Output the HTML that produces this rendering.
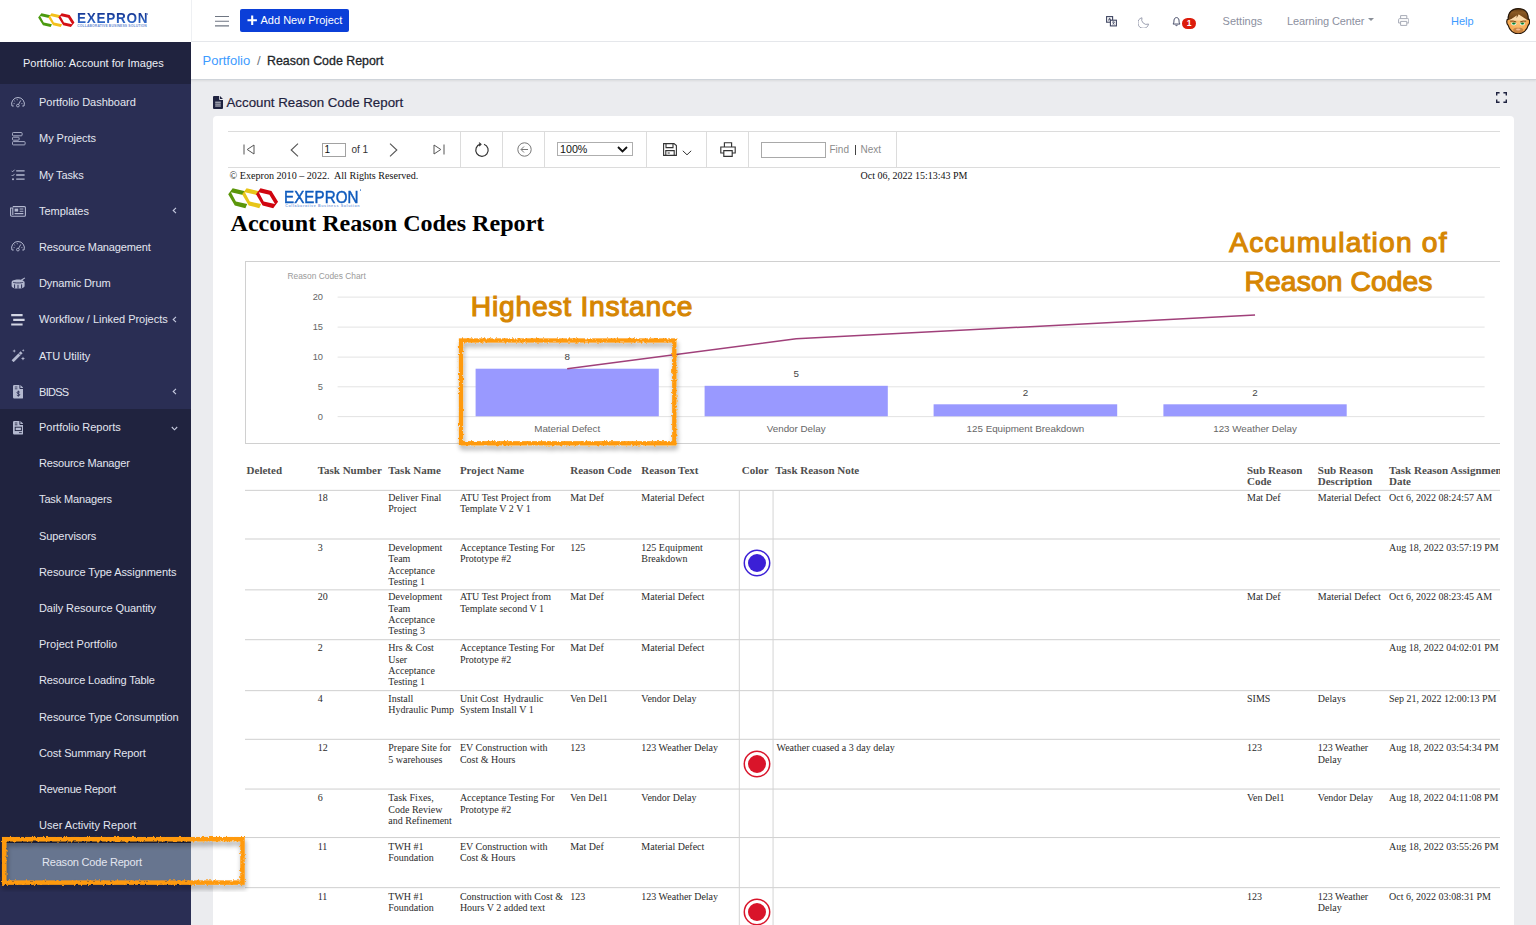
<!DOCTYPE html>
<html><head><meta charset="utf-8"><title>Reason Code Report</title><style>
*{box-sizing:border-box;margin:0;padding:0}
html,body{width:1536px;height:925px;overflow:hidden;background:#ebecef;font-family:"Liberation Sans",sans-serif;}
body{position:relative}
.abs{position:absolute}
.t{position:absolute;white-space:nowrap;line-height:1}
#side{position:absolute;left:0;top:0;width:190.5px;height:925px;background:#2a2e54}
#brand{position:absolute;left:0;top:0;width:190.5px;height:41.5px;background:#fff}
#acct{position:absolute;left:0;top:41.5px;width:190.5px;height:42.5px;background:#20233f}
#sub{position:absolute;left:0;top:409px;width:190.5px;height:476px;background:#20233f}
#active{position:absolute;left:4px;top:843px;width:186.5px;height:38px;background:#67758f}
.si{position:absolute;left:39px;white-space:nowrap;color:#e3e6f0;font-size:11px;line-height:14px}
.car{position:absolute;left:171px;color:#c7cbe0}
#top{position:absolute;left:190px;top:0;width:1346px;height:43px;background:#fff;border-bottom:2px solid #e6e8ec}
#crumb{position:absolute;left:190px;top:42px;width:1346px;height:38px;background:#fff;border-bottom:1px solid #cfd4da;box-shadow:0 1px 2px rgba(0,0,0,.08)}
#card{position:absolute;left:213px;top:116px;width:1301px;height:830px;background:#fff;border-radius:4px}
#rep{position:absolute;left:228px;top:131px;width:1271.5px;height:794px;overflow:hidden}
.sf{font-family:"Liberation Serif",serif}
.hd{position:absolute;font-family:"Liberation Serif",serif;font-weight:700;font-size:11px;line-height:11.3px;color:#4e4e4e;white-space:nowrap}
.c{position:absolute;font-family:"Liberation Serif",serif;font-size:10px;line-height:11.25px;color:#2b2b2b;white-space:nowrap}
.hl{position:absolute;left:17px;width:1260px;height:1px;background:#d4d4d4}
.vl{position:absolute;width:1px;background:#d9d9d9}
.ann{position:absolute;white-space:nowrap;font-weight:400;color:#d68603;-webkit-text-stroke:1.15px #d68603;font-size:28.2px;line-height:30px}
</style></head><body><div id="top"></div><div id="crumb"></div><svg class="abs" style="left:215px;top:15px" width="14" height="12" viewBox="0 0 14 12"><path d="M0 1.5h14M0 6.2h14M0 10.9h14" stroke="#6f7682" stroke-width="1.1" fill="none"/></svg><div class="abs" style="left:240.3px;top:8.5px;width:108.8px;height:23.8px;background:#0b3fd8;border-radius:2px"></div><svg class="abs" style="left:247.3px;top:15.3px" width="10.4" height="10.4" viewBox="0 0 11 11"><path d="M5.5 0.5v10M0.5 5.5h10" stroke="#fff" stroke-width="2.2" fill="none"/></svg><div class="t" style="left:260.5px;top:15.2px;font-size:11px;color:#fff">Add New Project</div><div class="t" style="left:1222.6px;top:15.7px;font-size:11px;color:#8c90a0">Settings</div><div class="t" style="left:1287px;top:15.7px;font-size:11px;color:#8c90a0;letter-spacing:-0.1px">Learning Center</div><div class="abs" style="left:1368.3px;top:18.2px;width:0;height:0;border-left:3px solid transparent;border-right:3px solid transparent;border-top:3px solid #8a8f98"></div><div class="t" style="left:1451px;top:15.7px;font-size:11px;color:#3d9bff">Help</div><div class="t" style="left:202.5px;top:54px;font-size:13px;color:#3d9bff">Portfolio</div><div class="t" style="left:257px;top:54px;font-size:13px;color:#6c757d">/</div><div class="t" style="left:267px;top:54.5px;font-size:12.4px;color:#212529;-webkit-text-stroke:0.3px #212529">Reason Code Report</div><svg class="abs" style="left:213px;top:96px" width="10" height="13" viewBox="0 0 10 13"><path d="M0 1a1 1 0 0 1 1-1h5.2v3.3a.6.6 0 0 0 .6.6H10V12a1 1 0 0 1-1 1H1a1 1 0 0 1-1-1zM7 0l3 3H7z" fill="#1f2340"/><path d="M2.2 6.2h5.6M2.2 8.1h5.6M2.2 10h5.6" stroke="#ebecef" stroke-width=".9"/></svg><div class="t" style="left:226.5px;top:95.5px;font-size:13.3px;color:#1f2340;-webkit-text-stroke:0.2px #1f2340">Account Reason Code Report</div><svg class="abs" style="left:1496px;top:92px" width="11" height="11" viewBox="0 0 11 11"><path d="M0.7 3.6V0.7H3.6M7.4 0.7H10.3V3.6M10.3 7.4V10.3H7.4M3.6 10.3H0.7V7.4" stroke="#1f2340" stroke-width="1.4" fill="none"/></svg><div id="side"></div><div id="brand"></div><div id="acct"></div><div id="sub"></div><div id="active"></div><div class="abs" style="left:191px;top:0;width:1px;height:41px;background:#eef0f3"></div><div class="t" style="left:23px;top:57.6px;font-size:11px;color:#eef0f6">Portfolio: Account for Images</div><div class="si" style="top:95.1px;letter-spacing:-0.024px">Portfolio Dashboard</div><div class="si" style="top:131.3px;letter-spacing:-0.037px">My Projects</div><div class="si" style="top:167.5px;letter-spacing:-0.134px">My Tasks</div><div class="si" style="top:203.7px;letter-spacing:-0.03px">Templates</div><svg class="abs" style="left:172px;top:207.3px" width="5" height="7" viewBox="0 0 5 7"><path d="M4 0.8L1.2 3.5L4 6.2" stroke="#c7cbe0" stroke-width="1.1" fill="none"/></svg><div class="si" style="top:239.9px;letter-spacing:-0.141px">Resource Management</div><div class="si" style="top:276.1px;letter-spacing:-0.103px">Dynamic Drum</div><div class="si" style="top:312.3px;letter-spacing:-0.028px">Workflow / Linked Projects</div><svg class="abs" style="left:172px;top:315.9px" width="5" height="7" viewBox="0 0 5 7"><path d="M4 0.8L1.2 3.5L4 6.2" stroke="#c7cbe0" stroke-width="1.1" fill="none"/></svg><div class="si" style="top:348.5px;letter-spacing:0.016px">ATU Utility</div><div class="si" style="top:384.7px;letter-spacing:-0.704px">BIDSS</div><svg class="abs" style="left:172px;top:388.3px" width="5" height="7" viewBox="0 0 5 7"><path d="M4 0.8L1.2 3.5L4 6.2" stroke="#c7cbe0" stroke-width="1.1" fill="none"/></svg><div class="si" style="top:420.0px;letter-spacing:-0.009px">Portfolio Reports</div><svg class="abs" style="left:171px;top:426.0px" width="7" height="5" viewBox="0 0 7 5"><path d="M0.8 1L3.5 3.8L6.2 1" stroke="#c7cbe0" stroke-width="1.1" fill="none"/></svg><div class="si" style="top:456.2px;letter-spacing:-0.184px">Resource Manager</div><div class="si" style="top:492.4px;letter-spacing:-0.124px">Task Managers</div><div class="si" style="top:528.6px;letter-spacing:-0.078px">Supervisors</div><div class="si" style="top:564.8px;letter-spacing:-0.075px">Resource Type Assignments</div><div class="si" style="top:601.0px;letter-spacing:-0.073px">Daily Resource Quantity</div><div class="si" style="top:637.2px;letter-spacing:0.028px">Project Portfolio</div><div class="si" style="top:673.4px;letter-spacing:-0.117px">Resource Loading Table</div><div class="si" style="top:709.6px;letter-spacing:-0.082px">Resource Type Consumption</div><div class="si" style="top:745.8px;letter-spacing:-0.106px">Cost Summary Report</div><div class="si" style="top:782.0px;letter-spacing:-0.231px">Revenue Report</div><div class="si" style="top:818.2px;letter-spacing:0.032px">User Activity Report</div><div class="si" style="left:42px;top:854.6px;letter-spacing:-0.2px">Reason Code Report</div><div id="card"></div><div id="rep"><div class="abs" style="left:0;top:0;width:1272px;height:1px;background:#dcdcdc"></div><div class="abs" style="left:0;top:36px;width:1272px;height:1px;background:#dcdcdc"></div><div class="abs" style="left:232.0px;top:1px;width:1px;height:35px;background:#dcdcdc"></div><div class="abs" style="left:273.5px;top:1px;width:1px;height:35px;background:#dcdcdc"></div><div class="abs" style="left:316.0px;top:1px;width:1px;height:35px;background:#dcdcdc"></div><div class="abs" style="left:418.0px;top:1px;width:1px;height:35px;background:#dcdcdc"></div><div class="abs" style="left:478.0px;top:1px;width:1px;height:35px;background:#dcdcdc"></div><div class="abs" style="left:520.0px;top:1px;width:1px;height:35px;background:#dcdcdc"></div><div class="abs" style="left:668.0px;top:1px;width:1px;height:35px;background:#dcdcdc"></div><svg class="abs" style="left:15px;top:13px" width="12" height="11" viewBox="0 0 12 11"><path d="M1 0.5v10" stroke="#555" stroke-width="1"/><path d="M11 1L4.2 5.5L11 10z" stroke="#555" stroke-width="1" fill="none" stroke-linejoin="round"/></svg><svg class="abs" style="left:61.5px;top:11.5px" width="9" height="14" viewBox="0 0 9 14"><path d="M8 0.7L1.2 7L8 13.3" stroke="#555" stroke-width="1.1" fill="none"/></svg><div class="abs" style="left:93.5px;top:11.5px;width:24px;height:14px;border:1px solid #a2a2a2;background:#fff"></div><div class="t" style="left:96.5px;top:13.5px;font-size:10px;color:#111">1</div><div class="t" style="left:123.5px;top:13.5px;font-size:10px;color:#333">of 1</div><svg class="abs" style="left:161px;top:11.5px" width="9" height="14" viewBox="0 0 9 14"><path d="M1 0.7L7.8 7L1 13.3" stroke="#555" stroke-width="1.1" fill="none"/></svg><svg class="abs" style="left:204.5px;top:13px" width="12" height="11" viewBox="0 0 12 11"><path d="M11 0.5v10" stroke="#555" stroke-width="1"/><path d="M1 1L7.8 5.5L1 10z" stroke="#555" stroke-width="1" fill="none" stroke-linejoin="round"/></svg><svg class="abs" style="left:246px;top:10.5px" width="16" height="16" viewBox="0 0 16 16"><path d="M6.3 2.2A6.2 6.2 0 1 0 10 2.3" stroke="#333" stroke-width="1.2" fill="none"/><path d="M5 0.6L7 2.2L5.2 4.2" stroke="#333" stroke-width="1.1" fill="none"/></svg><svg class="abs" style="left:288.5px;top:11px" width="15" height="15" viewBox="0 0 15 15"><circle cx="7.5" cy="7.5" r="6.7" stroke="#777" stroke-width="1" fill="none"/><path d="M11 7.5H4.2M7 4.5L4 7.5L7 10.5" stroke="#777" stroke-width="1" fill="none"/></svg><div class="abs" style="left:329px;top:11px;width:76px;height:14px;border:1px solid #aeaeae;background:#fff"></div><div class="t" style="left:332px;top:13.2px;font-size:10.7px;color:#111">100%</div><svg class="abs" style="left:389px;top:14.5px" width="11" height="7" viewBox="0 0 11 7"><path d="M1 1L5.5 5.5L10 1" stroke="#111" stroke-width="1.8" fill="none"/></svg><svg class="abs" style="left:434.5px;top:12px" width="14" height="13" viewBox="0 0 14 13"><path d="M0.6 0.6H11L13.4 2.6V12.4H0.6z" stroke="#333" stroke-width="1.1" fill="none"/><path d="M3 0.6V4.6H10V0.6M2.8 12.4V7.6H11.2V12.4M4.6 10h2.2" stroke="#333" stroke-width="1.1" fill="none"/></svg><svg class="abs" style="left:454px;top:19px" width="10" height="6" viewBox="0 0 10 6"><path d="M0.8 0.8L5 4.8L9.2 0.8" stroke="#333" stroke-width="1" fill="none"/></svg><svg class="abs" style="left:492px;top:11px" width="16" height="15" viewBox="0 0 16 15"><path d="M4.4 5V0.7H11.6V5M3.8 11H0.8V5H15.2V11H12.2M3.8 8.6H12.2V14.3H3.8z" stroke="#333" stroke-width="1.15" fill="none"/></svg><div class="abs" style="left:533px;top:11px;width:65px;height:15.5px;border:1px solid #a9a9a9;background:#fff"></div><div class="t" style="left:601.5px;top:14px;font-size:10px;color:#8c8c8c">Find</div><div class="abs" style="left:627.3px;top:13.5px;width:1px;height:10px;background:#444"></div><div class="t" style="left:632.5px;top:14px;font-size:10px;color:#8c8c8c">Next</div><div class="t sf" style="left:1.6px;top:39.7px;font-size:10.1px;color:#111">© Exepron 2010 – 2022.&nbsp; All Rights Reserved.</div><div class="t sf" style="left:632.5px;top:39.5px;font-size:10px;color:#111">Oct 06, 2022 15:13:43 PM</div><div class="t sf" style="left:2.5px;top:80px;font-size:24.1px;font-weight:700;color:#000">Account Reason Codes Report</div><div class="abs" style="left:17px;top:130px;width:1300px;height:183px;border:1px solid #d0d0d0"></div><div class="t" style="left:59.5px;top:140.8px;font-size:8.4px;color:#9a9a9a">Reason Codes Chart</div><svg class="abs" style="left:0;top:0" width="1272" height="400"><rect x="109.6" y="165.6" width="1147" height="1" fill="#e3e3e3"/><rect x="109.6" y="195.6" width="1147" height="1" fill="#e3e3e3"/><rect x="109.6" y="225.6" width="1147" height="1" fill="#e3e3e3"/><rect x="109.6" y="255.3" width="1147" height="1" fill="#e3e3e3"/><rect x="109.6" y="285.1" width="1147" height="1" fill="#e3e3e3"/><rect x="247.6" y="237.7" width="183.2" height="47.6" fill="#9999ff"/><rect x="476.6" y="254.8" width="183.2" height="30.5" fill="#9999ff"/><rect x="705.6" y="273.3" width="183.6" height="12.0" fill="#9999ff"/><rect x="935.4" y="273.3" width="183.3" height="12.0" fill="#9999ff"/><path d="M339.2 237.73 L568.2 207.84 L797.4 195.89 L1027.05 183.93" stroke="#a0407a" stroke-width="1.5" fill="none"/></svg><div class="t" style="left:72px;top:162.2px;width:23px;text-align:right;font-size:9.3px;color:#666">20</div><div class="t" style="left:72px;top:192.2px;width:23px;text-align:right;font-size:9.3px;color:#666">15</div><div class="t" style="left:72px;top:222.2px;width:23px;text-align:right;font-size:9.3px;color:#666">10</div><div class="t" style="left:72px;top:251.9px;width:23px;text-align:right;font-size:9.3px;color:#666">5</div><div class="t" style="left:72px;top:281.7px;width:23px;text-align:right;font-size:9.3px;color:#666">0</div><div class="t" style="left:289.2px;top:221.1px;width:100px;text-align:center;font-size:9.8px;color:#444">8</div><div class="t" style="left:239.2px;top:293.4px;width:200px;text-align:center;font-size:9.8px;color:#666">Material Defect</div><div class="t" style="left:518.2px;top:238.2px;width:100px;text-align:center;font-size:9.8px;color:#444">5</div><div class="t" style="left:468.20000000000005px;top:293.4px;width:200px;text-align:center;font-size:9.8px;color:#666">Vendor Delay</div><div class="t" style="left:747.4px;top:256.7px;width:100px;text-align:center;font-size:9.8px;color:#444">2</div><div class="t" style="left:697.4px;top:293.4px;width:200px;text-align:center;font-size:9.8px;color:#666">125 Equipment Breakdown</div><div class="t" style="left:977.05px;top:256.7px;width:100px;text-align:center;font-size:9.8px;color:#444">2</div><div class="t" style="left:927.05px;top:293.4px;width:200px;text-align:center;font-size:9.8px;color:#666">123 Weather Delay</div><div class="hd" style="left:18.6px;top:333.5px">Deleted</div><div class="hd" style="left:89.7px;top:333.5px">Task Number</div><div class="hd" style="left:160.3px;top:333.5px">Task Name</div><div class="hd" style="left:231.9px;top:333.5px">Project Name</div><div class="hd" style="left:342.2px;top:333.5px">Reason Code</div><div class="hd" style="left:413.3px;top:333.5px">Reason Text</div><div class="hd" style="left:513.7px;top:333.5px">Color</div><div class="hd" style="left:547.3px;top:333.5px">Task Reason Note</div><div class="hd" style="left:1019px;top:333.5px">Sub Reason<br>Code</div><div class="hd" style="left:1089.8px;top:333.5px">Sub Reason<br>Description</div><div class="hd" style="left:1161px;top:333.5px">Task Reason Assignment<br>Date</div><svg class="abs" style="left:0;top:0" width="1272" height="794"><rect x="17" y="358.85" width="1260" height="1" fill="#cfcfcf"/><rect x="17" y="407.5" width="1260" height="1" fill="#cfcfcf"/><rect x="17" y="458.35" width="1260" height="1" fill="#cfcfcf"/><rect x="17" y="508.2" width="1260" height="1" fill="#cfcfcf"/><rect x="17" y="559.15" width="1260" height="1" fill="#cfcfcf"/><rect x="17" y="607.8" width="1260" height="1" fill="#cfcfcf"/><rect x="17" y="657.55" width="1260" height="1" fill="#cfcfcf"/><rect x="17" y="706.05" width="1260" height="1" fill="#cfcfcf"/><rect x="17" y="756.15" width="1260" height="1" fill="#cfcfcf"/><rect x="510.8" y="359" width="1" height="440" fill="#d4d4d4"/><rect x="544.55" y="359" width="1" height="440" fill="#d4d4d4"/></svg><div class="c" style="left:89.7px;top:361.1px">18</div><div class="c" style="left:160.3px;top:361.1px">Deliver Final</div><div class="c" style="left:160.3px;top:372.35px">Project</div><div class="c" style="left:231.9px;top:361.1px">ATU Test Project from</div><div class="c" style="left:231.9px;top:372.35px">Template V 2 V 1</div><div class="c" style="left:342.2px;top:361.1px">Mat Def</div><div class="c" style="left:413.3px;top:361.1px">Material Defect</div><div class="c" style="left:1019px;top:361.1px">Mat Def</div><div class="c" style="left:1089.8px;top:361.1px">Material Defect</div><div class="c" style="left:1161px;top:361.1px">Oct 6, 2022 08:24:57 AM</div><div class="c" style="left:89.7px;top:411.15px">3</div><div class="c" style="left:160.3px;top:411.15px">Development</div><div class="c" style="left:160.3px;top:422.4px">Team</div><div class="c" style="left:160.3px;top:433.65px">Acceptance</div><div class="c" style="left:160.3px;top:444.9px">Testing 1</div><div class="c" style="left:231.9px;top:411.15px">Acceptance Testing For</div><div class="c" style="left:231.9px;top:422.4px">Prototype #2</div><div class="c" style="left:342.2px;top:411.15px">125</div><div class="c" style="left:413.3px;top:411.15px">125 Equipment</div><div class="c" style="left:413.3px;top:422.4px">Breakdown</div><div class="c" style="left:1161px;top:411.15px">Aug 18, 2022 03:57:19 PM</div><svg class="abs" style="left:514.5px;top:418.45px" width="28" height="28" viewBox="0 0 28 28"><circle cx="14" cy="14" r="12.7" fill="#fff" stroke="#3b1fd6" stroke-width="1.5"/><circle cx="14" cy="14" r="9.0" fill="#3b1fd6"/></svg><div class="c" style="left:89.7px;top:460.4px">20</div><div class="c" style="left:160.3px;top:460.4px">Development</div><div class="c" style="left:160.3px;top:471.65px">Team</div><div class="c" style="left:160.3px;top:482.9px">Acceptance</div><div class="c" style="left:160.3px;top:494.15px">Testing 3</div><div class="c" style="left:231.9px;top:460.4px">ATU Test Project from</div><div class="c" style="left:231.9px;top:471.65px">Template second V 1</div><div class="c" style="left:342.2px;top:460.4px">Mat Def</div><div class="c" style="left:413.3px;top:460.4px">Material Defect</div><div class="c" style="left:1019px;top:460.4px">Mat Def</div><div class="c" style="left:1089.8px;top:460.4px">Material Defect</div><div class="c" style="left:1161px;top:460.4px">Oct 6, 2022 08:23:45 AM</div><div class="c" style="left:89.7px;top:511.3px">2</div><div class="c" style="left:160.3px;top:511.3px">Hrs &amp; Cost</div><div class="c" style="left:160.3px;top:522.55px">User</div><div class="c" style="left:160.3px;top:533.8px">Acceptance</div><div class="c" style="left:160.3px;top:545.05px">Testing 1</div><div class="c" style="left:231.9px;top:511.3px">Acceptance Testing For</div><div class="c" style="left:231.9px;top:522.55px">Prototype #2</div><div class="c" style="left:342.2px;top:511.3px">Mat Def</div><div class="c" style="left:413.3px;top:511.3px">Material Defect</div><div class="c" style="left:1161px;top:511.3px">Aug 18, 2022 04:02:01 PM</div><div class="c" style="left:89.7px;top:561.5px">4</div><div class="c" style="left:160.3px;top:561.5px">Install</div><div class="c" style="left:160.3px;top:572.75px">Hydraulic Pump</div><div class="c" style="left:231.9px;top:561.5px">Unit Cost&nbsp; Hydraulic</div><div class="c" style="left:231.9px;top:572.75px">System Install V 1</div><div class="c" style="left:342.2px;top:561.5px">Ven Del1</div><div class="c" style="left:413.3px;top:561.5px">Vendor Delay</div><div class="c" style="left:1019px;top:561.5px">SIMS</div><div class="c" style="left:1089.8px;top:561.5px">Delays</div><div class="c" style="left:1161px;top:561.5px">Sep 21, 2022 12:00:13 PM</div><div class="c" style="left:89.7px;top:611.3px">12</div><div class="c" style="left:160.3px;top:611.3px">Prepare Site for</div><div class="c" style="left:160.3px;top:622.55px">5 warehouses</div><div class="c" style="left:231.9px;top:611.3px">EV Construction with</div><div class="c" style="left:231.9px;top:622.55px">Cost &amp; Hours</div><div class="c" style="left:342.2px;top:611.3px">123</div><div class="c" style="left:413.3px;top:611.3px">123 Weather Delay</div><div class="c" style="left:1019px;top:611.3px">123</div><div class="c" style="left:1089.8px;top:611.3px">123 Weather</div><div class="c" style="left:1089.8px;top:622.55px">Delay</div><div class="c" style="left:1161px;top:611.3px">Aug 18, 2022 03:54:34 PM</div><div class="c" style="left:548.5px;top:611.3px">Weather cuased a 3 day delay</div><svg class="abs" style="left:514.5px;top:618.75px" width="28" height="28" viewBox="0 0 28 28"><circle cx="14" cy="14" r="12.7" fill="#fff" stroke="#d9142a" stroke-width="1.5"/><circle cx="14" cy="14" r="9.0" fill="#d9142a"/></svg><div class="c" style="left:89.7px;top:661.3px">6</div><div class="c" style="left:160.3px;top:661.3px">Task Fixes,</div><div class="c" style="left:160.3px;top:672.55px">Code Review</div><div class="c" style="left:160.3px;top:683.8px">and Refinement</div><div class="c" style="left:231.9px;top:661.3px">Acceptance Testing For</div><div class="c" style="left:231.9px;top:672.55px">Prototype #2</div><div class="c" style="left:342.2px;top:661.3px">Ven Del1</div><div class="c" style="left:413.3px;top:661.3px">Vendor Delay</div><div class="c" style="left:1019px;top:661.3px">Ven Del1</div><div class="c" style="left:1089.8px;top:661.3px">Vendor Delay</div><div class="c" style="left:1161px;top:661.3px">Aug 18, 2022 04:11:08 PM</div><div class="c" style="left:89.7px;top:710.1px">11</div><div class="c" style="left:160.3px;top:710.1px">TWH #1</div><div class="c" style="left:160.3px;top:721.35px">Foundation</div><div class="c" style="left:231.9px;top:710.1px">EV Construction with</div><div class="c" style="left:231.9px;top:721.35px">Cost &amp; Hours</div><div class="c" style="left:342.2px;top:710.1px">Mat Def</div><div class="c" style="left:413.3px;top:710.1px">Material Defect</div><div class="c" style="left:1161px;top:710.1px">Aug 18, 2022 03:55:26 PM</div><div class="c" style="left:89.7px;top:759.9px">11</div><div class="c" style="left:160.3px;top:759.9px">TWH #1</div><div class="c" style="left:160.3px;top:771.15px">Foundation</div><div class="c" style="left:231.9px;top:759.9px">Construction with Cost &amp;</div><div class="c" style="left:231.9px;top:771.15px">Hours V 2 added text</div><div class="c" style="left:342.2px;top:759.9px">123</div><div class="c" style="left:413.3px;top:759.9px">123 Weather Delay</div><div class="c" style="left:1019px;top:759.9px">123</div><div class="c" style="left:1089.8px;top:759.9px">123 Weather</div><div class="c" style="left:1089.8px;top:771.15px">Delay</div><div class="c" style="left:1161px;top:759.9px">Oct 6, 2022 03:08:31 PM</div><svg class="abs" style="left:514.5px;top:767.1px" width="28" height="28" viewBox="0 0 28 28"><circle cx="14" cy="14" r="12.7" fill="#fff" stroke="#d9142a" stroke-width="1.5"/><circle cx="14" cy="14" r="9.0" fill="#d9142a"/></svg></div><svg class="abs" style="left:37.7px;top:12.75px;overflow:visible" width="36.6" height="14.29" viewBox="0 0 50.27 20.42" preserveAspectRatio="none"><polygon points="4.69,0.24 17.13,3.35 15.1,7.12 2.95,4.15 7.9,13.5 19.2,16.05 17.39,20.16 6.84,17.43 0.2,6.3" fill="#4a9a0e"/><polygon points="18.59,0.24 31.03,3.35 29.0,7.12 16.85,4.15 21.8,13.5 33.1,16.05 31.29,20.16 20.74,17.43 14.1,6.3" fill="#f3c11a"/><path d="M28.0 6.3 L32.49 0.24 L43.43 2.98 L50.07 13.72 L45.19 20.16 L34.64 17.43Z M30.75 4.15 L41.4 6.75 L47.0 16.05 L35.7 13.5Z" fill="#d40f14" fill-rule="evenodd"/></svg><div class="t" style="left:76.5px;top:10.6px;font-size:14.5px;font-weight:700;color:#1f49a8;letter-spacing:0.75px;transform:scaleX(0.935);transform-origin:0 0;background:linear-gradient(#183a96 20%,#2d66c8 85%);-webkit-background-clip:text;background-clip:text;-webkit-text-fill-color:transparent">EXEPRON</div><svg class="abs" style="left:76.8px;top:24.4px" width="71" height="4" viewBox="0 0 71 4"><text x="0.2" y="2.9" font-family="Liberation Sans" font-size="3.4" font-weight="700" fill="#6f8fd2" textLength="69.5" lengthAdjust="spacing">COLLABORATIVE BUSINESS SOLUTION</text></svg><div class="abs" style="left:146.6px;top:13.4px;width:1.6px;height:1.6px;border-radius:50%;background:#7d97d1"></div><svg class="abs" style="left:227.85px;top:187.7px;overflow:visible" width="50.27" height="20.42" viewBox="0 0 50.27 20.42" preserveAspectRatio="none"><polygon points="4.69,0.24 17.13,3.35 15.1,7.12 2.95,4.15 7.9,13.5 19.2,16.05 17.39,20.16 6.84,17.43 0.2,6.3" fill="#5b960a"/><polygon points="18.59,0.24 31.03,3.35 29.0,7.12 16.85,4.15 21.8,13.5 33.1,16.05 31.29,20.16 20.74,17.43 14.1,6.3" fill="#e8c518"/><path d="M28.0 6.3 L32.49 0.24 L43.43 2.98 L50.07 13.72 L45.19 20.16 L34.64 17.43Z M30.75 4.15 L41.4 6.75 L47.0 16.05 L35.7 13.5Z" fill="#d0050f" fill-rule="evenodd"/></svg><div class="t" style="left:284.3px;top:189.9px;font-size:16px;color:#0f5bbd;letter-spacing:0.1px;transform:scaleX(0.945);transform-origin:0 0;-webkit-text-stroke:0.45px #0f5bbd">EXEPRON</div><svg class="abs" style="left:284.6px;top:203.6px" width="76" height="4" viewBox="0 0 76 4"><text x="0.2" y="3.1" font-family="Liberation Sans" font-size="3.7" font-weight="700" fill="#7fa4dc" textLength="74.4" lengthAdjust="spacing">Collaborative Business Solution</text></svg><div class="abs" style="left:359.7px;top:189.3px;width:1.8px;height:1.8px;border-radius:50%;background:#5d92d6"></div><svg class="abs" style="left:1105.6px;top:16.4px" width="11" height="10.5" viewBox="0 0 11 10.5"><rect x="0.6" y="0.6" width="6" height="5.6" fill="#fff" stroke="#3f4561" stroke-width="1.1"/><rect x="4.4" y="4.2" width="6" height="5.7" fill="#fff" stroke="#3f4561" stroke-width="1.1"/><path d="M2.4 4.6L3.6 1.9L4.8 4.6M2.9 3.7H4.3" stroke="#3f4561" stroke-width=".8" fill="none"/><path d="M6.3 6H8.6M7.4 5.6V6M6.6 8.6C7.6 8 8.2 7 8.3 6M6.7 6.6C7.1 7.6 7.7 8.2 8.5 8.6" stroke="#3f4561" stroke-width=".8" fill="none"/></svg><svg class="abs" style="left:1137.8px;top:16.8px" width="11.4" height="11.4" viewBox="0 0 12 12"><path d="M4.2 0.8A5.6 5.6 0 1 0 11.1 7.4A5.2 5.2 0 0 1 4.2 0.8z" stroke="#8d92a5" stroke-width=".9" fill="none" stroke-linejoin="round"/></svg><svg class="abs" style="left:1172.4px;top:16.9px" width="9" height="9.9" viewBox="0 0 9.4 10.4"><path d="M1 7.4C2.2 6.4 1.9 4.6 2.1 3.2C2.4 1.5 3.4 0.6 4.7 0.6C6 0.6 7 1.5 7.3 3.2C7.5 4.6 7.2 6.4 8.4 7.4z" stroke="#3f4561" stroke-width="1" fill="none" stroke-linejoin="round"/><path d="M3.5 8.3A1.3 1.3 0 0 0 5.9 8.3" stroke="#3f4561" stroke-width="1" fill="none"/></svg><div class="abs" style="left:1182.4px;top:17.6px;width:13.6px;height:11.3px;border-radius:6px;background:#dc1c0c"></div><div class="t" style="left:1182.4px;top:19.1px;width:13.6px;text-align:center;font-size:8.6px;font-weight:700;color:#fff">1</div><svg class="abs" style="left:1397.8px;top:14.8px" width="11.4" height="11" viewBox="0 0 11.4 11"><path d="M2.6 3.6V0.6H8.8V3.6M2.6 8H0.6V4.6Q0.6 3.6 1.6 3.6H9.8Q10.8 3.6 10.8 4.6V8H8.8M2.6 6.4H8.8V10.4H2.6z" stroke="#a7abb7" stroke-width="1" fill="none" stroke-linejoin="round"/></svg><svg class="abs" style="left:1505.7px;top:7.7px" width="24.4" height="26.4" viewBox="0 0 24.4 26.4">
<defs>
<clipPath id="hd"><path id="hdp" d="M12.2 0.6C18.7 0.6 22.3 4.6 22.3 10.9C24 11.3 24.2 15.6 22.3 17.2C21 22.2 17 25.8 12.2 25.8C7.4 25.8 3.4 22.2 2.1 17.2C0.2 15.6 0.4 11.3 2.1 10.9C2.1 4.6 5.7 0.6 12.2 0.6z"/></clipPath>
<linearGradient id="hair" x1="0" y1="0" x2="0" y2="1"><stop offset="0" stop-color="#5a3410"/><stop offset="0.35" stop-color="#8a5a24"/><stop offset="1" stop-color="#6a3f14"/></linearGradient>
<radialGradient id="face" cx="0.5" cy="0.55" r="0.6"><stop offset="0" stop-color="#fcc277"/><stop offset="1" stop-color="#f29a3c"/></radialGradient>
</defs>
<g clip-path="url(#hd)">
<rect width="24.4" height="26.4" fill="url(#face)"/>
<path d="M3 12L12.4 6.2L21.4 12L19 12.6H5.4z" fill="#fbdcae"/>
<path d="M0 0H24.4V12.4L21 11.8C19 10.6 15.6 8 12.6 6.2C12.2 7.6 11.4 9 10.4 10C10.6 8.8 10.8 8 10.8 7.2C8.6 8.8 6 10.8 3.4 11.8L0 12.4z" fill="url(#hair)"/>
<path d="M7.2 21.2C8.4 20 10 19.8 12.2 19.9C14.4 19.8 16 20 17.2 21.2C17.6 23.4 15.4 26.4 12.2 26.4C9 26.4 6.8 23.4 7.2 21.2z" fill="#b9763a" opacity="0.75"/>
<ellipse cx="12.2" cy="21.5" rx="2.2" ry="0.9" fill="#f6b88e"/>
<path d="M5.2 14.7A2.6 2.6 0 0 0 10.4 14.7z" fill="#fff"/><path d="M13.8 14.7A2.6 2.6 0 0 0 19 14.7z" fill="#fff"/>
<path d="M5.7 14.7A2.1 2.1 0 0 0 9.9 14.7z" fill="#18a24c"/><path d="M14.3 14.7A2.1 2.1 0 0 0 18.5 14.7z" fill="#18a24c"/>
<path d="M6.9 14.7A0.9 0.9 0 0 0 8.7 14.7z" fill="#10301c"/><path d="M15.5 14.7A0.9 0.9 0 0 0 17.3 14.7z" fill="#10301c"/>
<path d="M4.2 13.2Q7 12.6 10.2 13.9M14.2 13.9Q17.4 12.6 20.2 13.2" stroke="#7a4a1c" stroke-width="1" fill="none"/>
</g>
<use href="#hdp" fill="none" stroke="#24170b" stroke-width="1.15"/>
</svg><svg class="abs" style="left:11.4px;top:96.7px" width="14" height="11" viewBox="0 0 14 11"><path d="M2.7 9H0.95A6.4 6.4 0 1 1 13.05 9H11.3" stroke="#b4b9d0" stroke-width="1" fill="none"/><circle cx="6.9" cy="8.6" r="1.35" stroke="#b4b9d0" stroke-width="0.9" fill="none"/><path d="M7.5 7.4L9.8 3.4M2.6 6.6h1M3.4 3.8l.8.7M6.2 2.2l.1 1M11.4 6.6h-1" stroke="#b4b9d0" stroke-width="0.9" fill="none"/></svg><svg class="abs" style="left:11.4px;top:241.2px" width="14" height="11" viewBox="0 0 14 11"><path d="M2.7 9H0.95A6.4 6.4 0 1 1 13.05 9H11.3" stroke="#b4b9d0" stroke-width="1" fill="none"/><circle cx="6.9" cy="8.6" r="1.35" stroke="#b4b9d0" stroke-width="0.9" fill="none"/><path d="M7.5 7.4L9.8 3.4M2.6 6.6h1M3.4 3.8l.8.7M6.2 2.2l.1 1M11.4 6.6h-1" stroke="#b4b9d0" stroke-width="0.9" fill="none"/></svg><svg class="abs" style="left:11.8px;top:132px" width="14" height="14" viewBox="0 0 14 14"><rect x="0.5" y="0.5" width="9.6" height="3.3" rx="0.8" stroke="#b4b9d0" stroke-width="0.9" fill="none"/><rect x="0.5" y="5.2" width="6.6" height="3" rx="0.8" stroke="#b4b9d0" stroke-width="0.9" fill="none"/><rect x="0.5" y="9.6" width="12.6" height="3.3" rx="0.8" stroke="#b4b9d0" stroke-width="0.9" fill="none"/></svg><svg class="abs" style="left:11.4px;top:169px" width="14" height="12" viewBox="0 0 14 12"><path d="M5.2 1.8H13.6M5.2 6H13.6M5.2 10.2H13.6" stroke="#b4b9d0" stroke-width="1.3"/><path d="M0.6 1.8L1.6 2.8L3.6 0.7M0.6 6L1.6 7L3.6 4.9" stroke="#b4b9d0" stroke-width="0.9" fill="none"/><circle cx="2" cy="10.2" r="1" fill="#b4b9d0"/></svg><svg class="abs" style="left:10.2px;top:205.6px" width="16" height="11" viewBox="0 0 16 11"><path d="M2.8 0.6H14.4Q15.4 0.6 15.4 1.6V9.2Q15.4 10.2 14.4 10.2H1.8Q0.6 10.2 0.6 9V2H2.8V9" stroke="#b4b9d0" stroke-width="1.1" fill="none"/><rect x="4.6" y="2.6" width="3.6" height="3" fill="#b4b9d0"/><path d="M9.6 3H13.4M9.6 5.2H13.4M4.6 7.6H13.4" stroke="#b4b9d0" stroke-width="1.1"/></svg><svg class="abs" style="left:11px;top:277px" width="15" height="12" viewBox="0 0 15 12"><path d="M0.6 5.2C0.6 3.4 3.6 2.4 7 2.4C8 2.4 9 2.5 9.8 2.7L13.6 0.5L14.2 1.3L11.4 3.2C12.8 3.7 13.6 4.4 13.6 5.2V9C13.6 10.6 10.6 11.6 7 11.6C3.4 11.6 0.6 10.6 0.6 9z" fill="#b4b9d0"/><path d="M2 5.2C3 6.2 11 6.2 12.2 5.2" stroke="#2a2e54" stroke-width="0.9" fill="none"/><path d="M3.6 7.4V11M7 7.8V11.6M10.6 7.4V11" stroke="#2a2e54" stroke-width="1"/></svg><svg class="abs" style="left:11.4px;top:313.8px" width="14" height="12" viewBox="0 0 14 12"><path d="M0.2 1.1H11.6M2.2 5.8H13.6M0.2 10.5H11.6" stroke="#d3d6e4" stroke-width="2.2"/></svg><svg class="abs" style="left:11.2px;top:348.8px" width="14" height="13.4" viewBox="0 0 14 13.4"><path d="M0.6 11.2L9.6 2.2L11.6 4.2L2.6 13.2z" fill="#b4b9d0"/><path d="M7.6 4.2L9.6 6.2" stroke="#2a2e54" stroke-width="0.8"/><path d="M3.2 0.2L3.7 1.5L5 2L3.7 2.5L3.2 3.8L2.7 2.5L1.4 2L2.7 1.5zM12 7.6L12.6 9L14 9.6L12.6 10.2L12 11.6L11.4 10.2L10 9.6L11.4 9zM12.2 0L12.6 1L13.6 1.4L12.6 1.8L12.2 2.8L11.8 1.8L10.8 1.4L11.8 1z" fill="#b4b9d0"/></svg><svg class="abs" style="left:12.6px;top:385.2px" width="10.6" height="13.4" viewBox="0 0 10.6 13.4"><path d="M0 1.2Q0 0 1.2 0H6.4V3.2Q6.4 4 7.2 4H10.6V12.2Q10.6 13.4 9.4 13.4H1.2Q0 13.4 0 12.2zM7.4 0L10.6 3.1H7.4z" fill="#b4b9d0"/><path d="M1.8 2H4.4M1.8 3.8H4.4" stroke="#2a2e54" stroke-width="0.8"/><path d="M5.3 5.6V11.6M6.8 7.2C6 6.4 4 6.6 4 7.7C4 9 6.8 8.4 6.8 9.8C6.8 10.8 4.6 11 3.8 10.1" stroke="#2a2e54" stroke-width="0.9" fill="none"/></svg><svg class="abs" style="left:12.6px;top:421.4px" width="10.6" height="13.4" viewBox="0 0 10.6 13.4"><path d="M0 1.2Q0 0 1.2 0H6.4V3.2Q6.4 4 7.2 4H10.6V12.2Q10.6 13.4 9.4 13.4H1.2Q0 13.4 0 12.2zM7.4 0L10.6 3.1H7.4z" fill="#b4b9d0"/><path d="M1.8 2H4.4M1.8 3.8H4.4M6 11.6H8.8" stroke="#20233f" stroke-width="0.8"/><rect x="2.2" y="6.2" width="6.2" height="3.4" stroke="#20233f" stroke-width="0.9" fill="none"/></svg><svg class="abs" style="left:0;top:0;pointer-events:none" width="1536" height="925">
<defs>
<filter id="rough" x="-5%" y="-20%" width="110%" height="140%"><feTurbulence type="fractalNoise" baseFrequency="0.42" numOctaves="3" seed="7" result="n"/><feDisplacementMap in="SourceGraphic" in2="n" scale="3.2" xChannelSelector="R" yChannelSelector="G" result="d"/><feGaussianBlur in="d" stdDeviation="2.4" result="b"/><feOffset in="b" dx="0.5" dy="3.5" result="o"/><feComponentTransfer in="o" result="sh"><feFuncR type="linear" slope="0" intercept="0"/><feFuncG type="linear" slope="0" intercept="0"/><feFuncB type="linear" slope="0" intercept="0"/><feFuncA type="linear" slope="0.33"/></feComponentTransfer><feMerge><feMergeNode in="sh"/><feMergeNode in="d"/></feMerge></filter>
</defs>
<rect x="4.2" y="839.2" width="238.3" height="43.4" fill="none" stroke="#ff9a0c" stroke-width="4.5" filter="url(#rough)"/>
<rect x="461" y="340.5" width="213.3" height="102.8" fill="none" stroke="#ff9a0c" stroke-width="4.3" filter="url(#rough)"/>
</svg><div class="ann" style="left:470.8px;top:291.1px;letter-spacing:0.78px">Highest Instance</div><div class="ann" style="left:1229.2px;top:226.5px;letter-spacing:1.2px">Accumulation of</div><div class="ann" style="left:1244.6px;top:265.9px;letter-spacing:0.12px">Reason Codes</div></body></html>
